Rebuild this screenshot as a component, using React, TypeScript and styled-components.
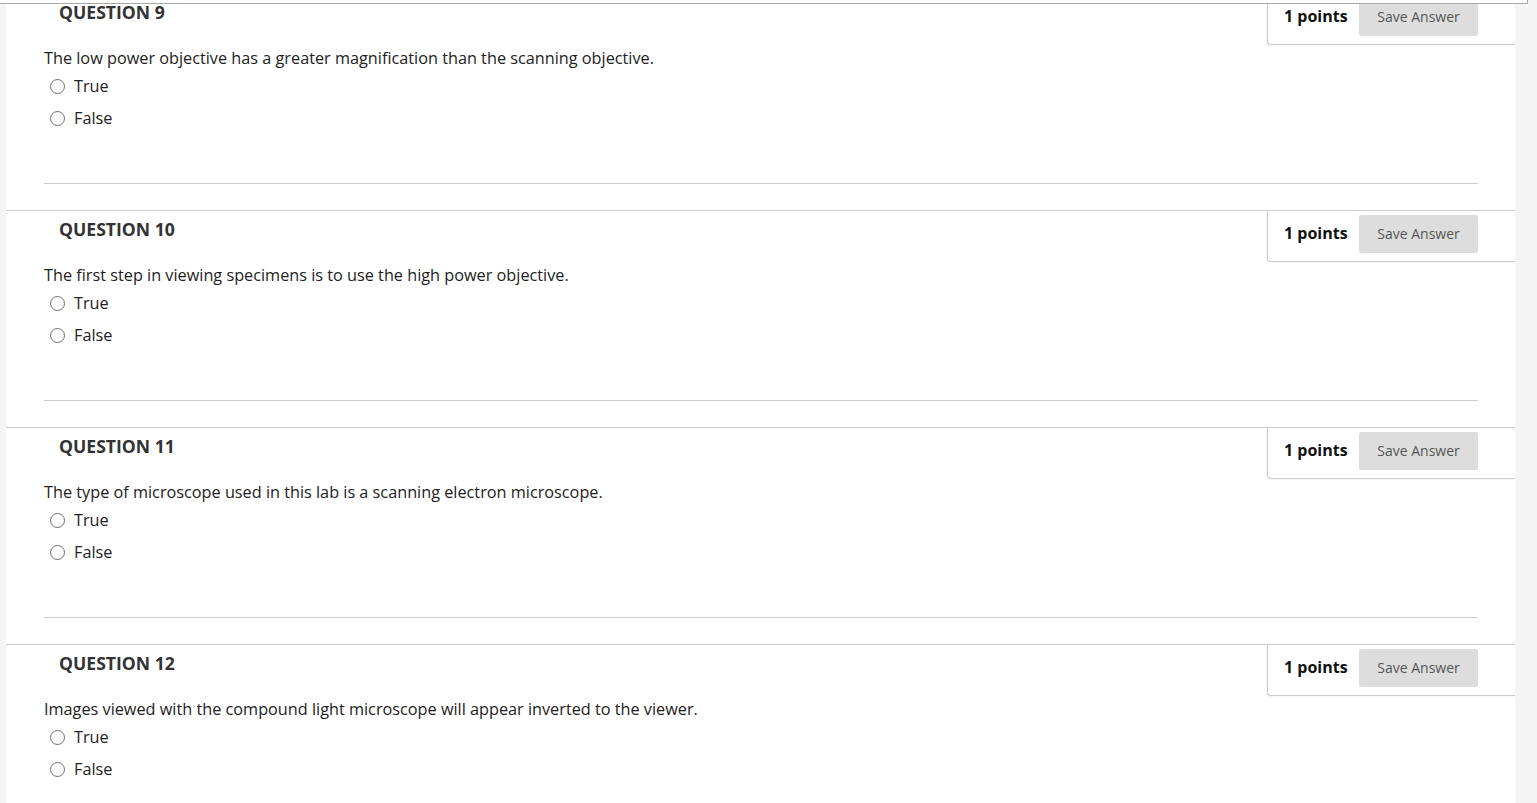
import React from "react";
import styled, { createGlobalStyle } from "styled-components";

const GlobalStyle = createGlobalStyle`
  html, body {
    margin: 0;
    padding: 0;
    background: #f4f4f4;
    font-family: "Open Sans", "Liberation Sans", sans-serif;
    overflow: hidden;
  }
  * { box-sizing: border-box; }
`;

const TopBar = styled.div`
  position: fixed;
  top: 0;
  left: 0;
  width: 1528px;
  height: 4px;
  background: #ffffff;
  border-bottom: 1px solid #a9a9a9;
  border-right: 1px solid #a9a9a9;
  z-index: 2;
`;

const Page = styled.ol`
  list-style: none;
  margin: -7px 0 0 6px;
  padding: 0;
  width: 1509px;
  background: #ffffff;
`;

const Question = styled.li`
  border-top: 1px solid #cccccc;
`;

const HeaderRow = styled.div`
  display: flex;
  justify-content: space-between;
  align-items: flex-start;
`;

const Title = styled.h3`
  margin: 0;
  padding: 6px 0 0 53px;
  font-size: 17.6px;
  line-height: 24px;
  font-weight: 700;
  color: #333333;
`;

const PointsBox = styled.div`
  width: 248px;
  height: 51px;
  display: flex;
  align-items: flex-start;
  padding: 4px 37px 8px 16px;
  border-left: 1px solid #cccccc;
  border-bottom: 1px solid #cccccc;
  border-bottom-left-radius: 4px;
  box-shadow: -1px 1px 1px rgba(0, 0, 0, 0.04);
`;

const Points = styled.span`
  font-size: 16px;
  line-height: 24px;
  margin-top: 6px;
  font-weight: 700;
  color: #111111;
  flex: 1;
  white-space: nowrap;
`;

const SaveButton = styled.button`
  width: 119px;
  height: 38px;
  border: none;
  border-radius: 2px;
  background: #dddddd;
  color: #555555;
  font-family: "Open Sans", "Liberation Sans", sans-serif;
  font-size: 14px;
  padding: 0 0 1px 0;
  cursor: pointer;
`;

const Body = styled.div`
  padding: 1px 37px 26px 38px;
`;

const Prompt = styled.p`
  margin: 0;
  font-size: 16.25px;
  line-height: 24px;
  color: #222222;
`;

const Options = styled.div`
  display: flex;
  flex-direction: column;
  gap: 8px;
  margin-top: 4px;
  padding-left: 6px;
`;

const Option = styled.label`
  display: flex;
  align-items: center;
  gap: 9px;
  font-size: 16.25px;
  line-height: 24px;
  color: #222222;
  cursor: pointer;
`;

const Radio = styled.span`
  width: 15px;
  height: 15px;
  border: 1.3px solid #6f6f6f;
  border-radius: 50%;
  background: #ffffff;
  flex: none;
`;

const Divider = styled.hr`
  margin: 53px 0 0 0;
  border: none;
  border-top: 1px solid #cccccc;
  height: 0;
`;

const questions = [
  { n: 9, text: "The low power objective has a greater magnification than the scanning objective." },
  { n: 10, text: "The first step in viewing specimens is to use the high power objective." },
  { n: 11, text: "The type of microscope used in this lab is a scanning electron microscope." },
  { n: 12, text: "Images viewed with the compound light microscope will appear inverted to the viewer." },
];

export default function App() {
  return (
    <>
      <GlobalStyle />
      <TopBar />
      <Page>
        {questions.map((q) => (
          <Question key={q.n}>
            <HeaderRow>
              <Title>QUESTION {q.n}</Title>
              <PointsBox>
                <Points>1 points</Points>
                <SaveButton>Save Answer</SaveButton>
              </PointsBox>
            </HeaderRow>
            <Body>
              <Prompt>{q.text}</Prompt>
              <Options>
                <Option>
                  <Radio />
                  True
                </Option>
                <Option>
                  <Radio />
                  False
                </Option>
              </Options>
              <Divider />
            </Body>
          </Question>
        ))}
      </Page>
    </>
  );
}
